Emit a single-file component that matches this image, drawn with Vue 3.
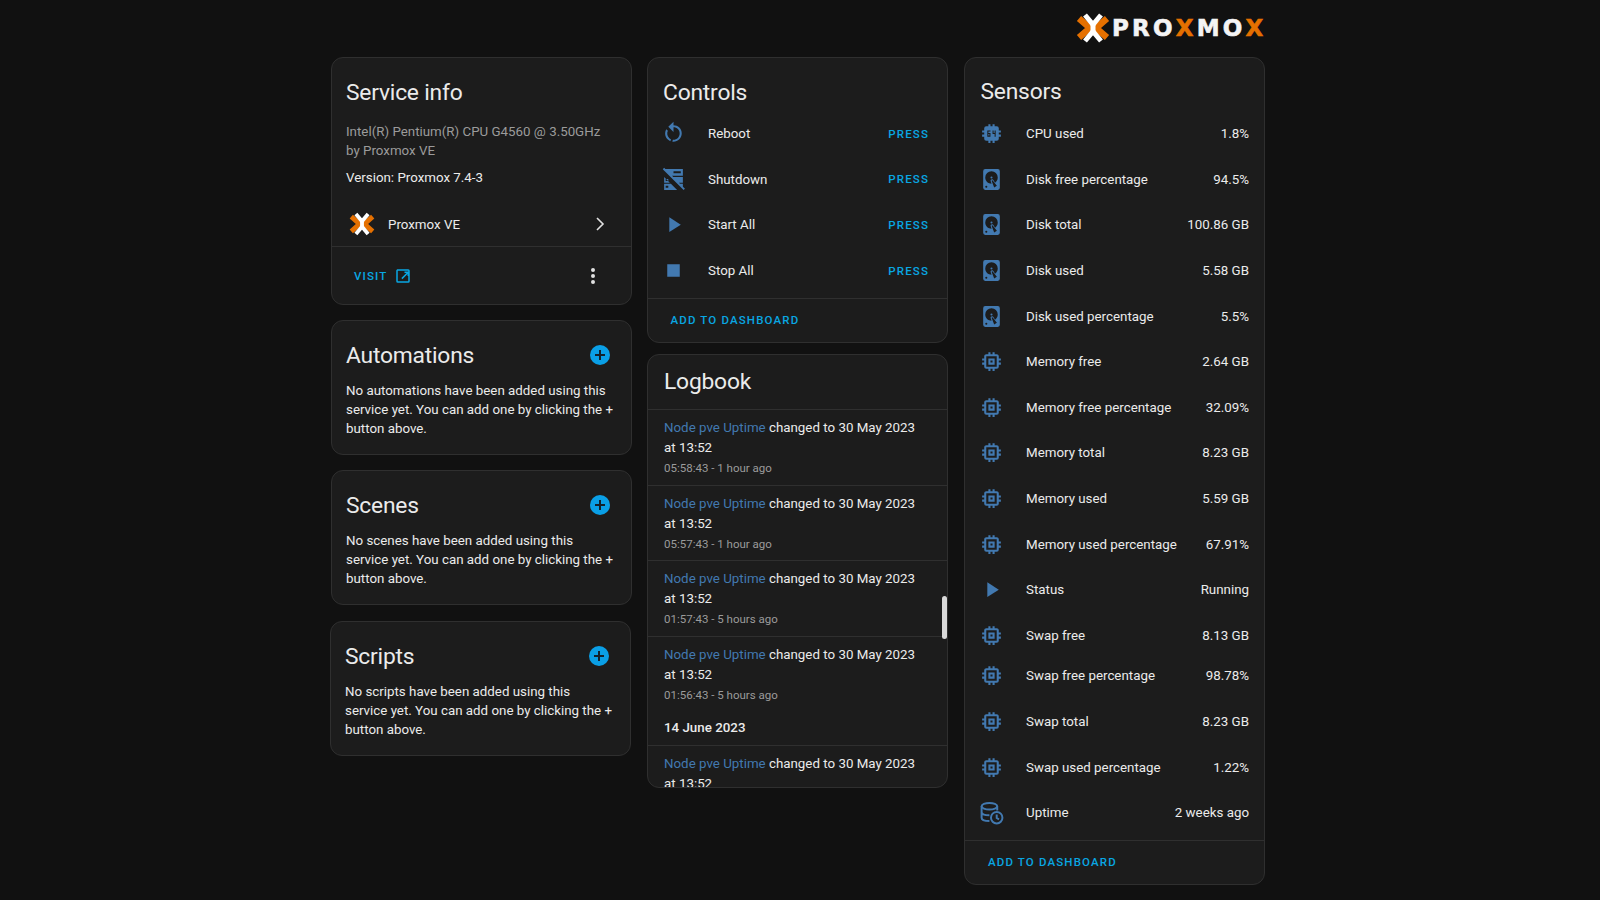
<script setup>
const chip = 'M17,17H7V7H17M21,11V9H19V7C19,5.89 18.1,5 17,5H15V3H13V5H11V3H9V5H7C5.89,5 5,5.89 5,7V9H3V11H5V13H3V15H5V17A2,2 0 0,0 7,19H9V21H11V19H13V21H15V19H17A2,2 0 0,0 19,17V15H21V13H19V11M13,13H11V11H13M15,9H9V15H15V9Z';
const disk = 'M6,2H18A2,2 0 0,1 20,4V20A2,2 0 0,1 18,22H6A2,2 0 0,1 4,20V4A2,2 0 0,1 6,2M12,4A6,6 0 0,0 6,10C6,13.31 8.69,16 12.1,16L11.22,13.77C10.95,13.15 11.2,12.44 11.77,12.1L12.2,11.9C12.8,11.6 13.5,11.9 13.8,12.5L15.4,15C16.9,14.1 18,12.2 18,10A6,6 0 0,0 12,4M12,9A1,1 0 0,1 13,10A1,1 0 0,1 12,11A1,1 0 0,1 11,10A1,1 0 0,1 12,9M7,18A1,1 0 0,0 6,19A1,1 0 0,0 7,20A1,1 0 0,0 8,19A1,1 0 0,0 7,18M12.09,13.27L14.58,19.58L17.17,18.08L12.95,12.77L12.09,13.27Z';
const play = 'M8,5.14V19.14L19,12.14L8,5.14Z';
const stop = 'M18,18H6V6H18V18Z';
const restart = 'M12,4C14.1,4 16.1,4.8 17.6,6.3C20.7,9.4 20.7,14.5 17.6,17.6C15.8,19.5 13.3,20.2 10.9,19.9L11.4,17.9C13.1,18.1 14.9,17.5 16.2,16.2C18.5,13.9 18.5,10.1 16.2,7.7C15.1,6.6 13.5,6 12,6V10.6L7,5.6L12,0.6V4M6.3,17.6C3.7,15 3.3,11 5.1,7.9L6.6,9.4C5.5,11.6 5.9,14.4 7.8,16.2C8.3,16.7 8.9,17.1 9.6,17.4L9,19.4C8,19 7.1,18.4 6.3,17.6Z';
const serverOff = 'M3,2H21V8.5H9L3,2.5ZM19,4H12V6H19ZM3,9.5L8.5,15H3ZM7,11.5H4.5V13.5H7ZM11,9.5H21V15H16.5ZM3,16H9.5L15.5,22H3ZM7,18H4.5V20H7ZM17.5,16H21V20.5ZM1.7,2.1L3,0.8L23,20.8L21.7,22.1Z';

const controls = [
    { name: 'Reboot', icon: restart },
    { name: 'Shutdown', icon: serverOff },
    { name: 'Start All', icon: play },
    { name: 'Stop All', icon: stop },
];

const sensors = [
    { name: 'CPU used', value: '1.8%', type: 'cpu' },
    { name: 'Disk free percentage', value: '94.5%', icon: disk },
    { name: 'Disk total', value: '100.86 GB', icon: disk },
    { name: 'Disk used', value: '5.58 GB', icon: disk },
    { name: 'Disk used percentage', value: '5.5%', icon: disk },
    { name: 'Memory free', value: '2.64 GB', icon: chip },
    { name: 'Memory free percentage', value: '32.09%', icon: chip },
    { name: 'Memory total', value: '8.23 GB', icon: chip },
    { name: 'Memory used', value: '5.59 GB', icon: chip },
    { name: 'Memory used percentage', value: '67.91%', icon: chip },
    { name: 'Status', value: 'Running', icon: play },
    { name: 'Swap free', value: '8.13 GB', icon: chip },
    { name: 'Swap free percentage', value: '98.78%', icon: chip, short: true },
    { name: 'Swap total', value: '8.23 GB', icon: chip },
    { name: 'Swap used percentage', value: '1.22%', icon: chip },
    { name: 'Uptime', value: '2 weeks ago', type: 'uptime' },
];

const logTimes = [
    '05:58:43 - 1 hour ago',
    '05:57:43 - 1 hour ago',
    '01:57:43 - 5 hours ago',
    '01:56:43 - 5 hours ago',
];

const emptyCards = [
    { title: 'Automations', text: 'No automations have been added using this service yet. You can add one by clicking the + button above.' },
    { title: 'Scenes', text: 'No scenes have been added using this service yet. You can add one by clicking the + button above.' },
    { title: 'Scripts', text: 'No scripts have been added using this service yet. You can add one by clicking the + button above.' },
];
</script>

<template>
    <div class="page">
        <div class="logo">
            <svg class="logo-mark" viewBox="0 0 34 30">
                <polyline points="3,5.5 14,15 3,24.5" fill="none" stroke="#e57000" stroke-width="6.5" />
                <polyline points="31,5.5 20,15 31,24.5" fill="none" stroke="#e57000" stroke-width="6.5" />
                <polyline points="9,2 17,11.5 25,2" fill="none" stroke="#fff" stroke-width="5" />
                <polyline points="9,28 17,18.5 25,28" fill="none" stroke="#fff" stroke-width="5" />
                <rect x="14.5" y="11" width="5" height="8" fill="#fff" />
            </svg>
            <span class="logo-word">PRO<b>X</b>MO<b>X</b></span>
        </div>

        <div class="columns">
            <div class="col col-left">
                <section class="card service">
                    <h2>Service info</h2>
                    <p class="muted first">Intel(R) Pentium(R) CPU G4560 @ 3.50GHz<br>by Proxmox VE</p>
                    <p class="version">Version: Proxmox 7.4-3</p>
                    <div class="device">
                        <svg class="device-mark" viewBox="0 0 34 30">
                            <polyline points="3,5.5 14,15 3,24.5" fill="none" stroke="#e57000" stroke-width="6.5" />
                            <polyline points="31,5.5 20,15 31,24.5" fill="none" stroke="#e57000" stroke-width="6.5" />
                            <polyline points="9,2 17,11.5 25,2" fill="none" stroke="#fff" stroke-width="5" />
                            <polyline points="9,28 17,18.5 25,28" fill="none" stroke="#fff" stroke-width="5" />
                            <rect x="14.5" y="11" width="5" height="8" fill="#fff" />
                        </svg>
                        <span class="device-name">Proxmox VE</span>
                        <svg class="chevron" viewBox="0 0 24 24"><polyline points="9,6 15,12 9,18" /></svg>
                    </div>
                    <div class="service-foot">
                        <span class="action">VISIT</span>
                        <svg class="open" viewBox="0 0 24 24"><path d="M14,6V8H16.59L9.76,14.83L11.17,16.24L18,9.41V12H20V6M19,19H5V5H12V3H5C3.89,3 3,3.9 3,5V19A2,2 0 0,0 5,21H19A2,2 0 0,0 21,19V12H19V19Z" /><path d="M12,3H19A2,2 0 0,1 21,5V12H19V5H12Z" /></svg>
                        <svg class="dots" viewBox="0 0 24 24"><path d="M12,16A2,2 0 0,1 14,18A2,2 0 0,1 12,20A2,2 0 0,1 10,18A2,2 0 0,1 12,16M12,10A2,2 0 0,1 14,12A2,2 0 0,1 12,14A2,2 0 0,1 10,12A2,2 0 0,1 12,10M12,4A2,2 0 0,1 14,6A2,2 0 0,1 12,8A2,2 0 0,1 10,6A2,2 0 0,1 12,4Z" /></svg>
                    </div>
                </section>

                <section v-for="c in emptyCards" :key="c.title" class="card empty">
                    <div class="empty-head">
                        <h2>{{ c.title }}</h2>
                        <svg class="plus" viewBox="0 0 24 24">
                            <circle cx="12" cy="12" r="10" fill="#0a9fe6" />
                            <path d="M17,13H13V17H11V13H7V11H11V7H13V11H17Z" fill="#14212b" />
                        </svg>
                    </div>
                    <p class="empty-text">{{ c.text }}</p>
                </section>
            </div>

            <div class="col">
                <section class="card controls">
                    <h2>Controls</h2>
                    <div class="control-list">
                        <div v-for="c in controls" :key="c.name" class="row control">
                            <svg class="state" viewBox="0 0 24 24"><path :d="c.icon" /></svg>
                            <span class="row-name">{{ c.name }}</span>
                            <span class="press">PRESS</span>
                        </div>
                    </div>
                    <div class="foot"><span class="action">ADD TO DASHBOARD</span></div>
                </section>

                <section class="card logbook">
                    <h2>Logbook</h2>
                    <div class="log-list">
                        <div v-for="t in logTimes" :key="t" class="log-entry">
                            <div class="log-msg"><span class="link">Node pve Uptime</span> changed to 30 May 2023 at 13:52</div>
                            <div class="log-time">{{ t }}</div>
                        </div>
                        <div class="log-date">14 June 2023</div>
                        <div class="log-entry">
                            <div class="log-msg"><span class="link">Node pve Uptime</span> changed to 30 May 2023 at 13:52</div>
                        </div>
                    </div>
                    <div class="thumb"></div>
                </section>
            </div>

            <div class="col col-right">
                <section class="card sensors">
                    <h2>Sensors</h2>
                    <div class="sensor-list">
                        <div v-for="s in sensors" :key="s.name" class="row sensor" :class="{ short: s.short }">
                            <svg v-if="s.type === 'cpu'" class="state" viewBox="0 0 24 24">
                                <path d="M9,3V5H7A2,2 0 0,0 5,7V9H3V11H5V13H3V15H5V17A2,2 0 0,0 7,19H9V21H11V19H13V21H15V19H17A2,2 0 0,0 19,17V15H21V13H19V11H21V9H19V7A2,2 0 0,0 17,5H15V3H13V5H11V3H9Z" />
                                <path d="M8,9H11V10H9V11.5H11V15H8ZM9,12.5V14H10V12.5ZM13,9H14V11.5H15V9H16V15H15V12.5H13Z" fill="#1c1c1c" />
                            </svg>
                            <svg v-else-if="s.type === 'uptime'" class="state" viewBox="0 0 24 24">
                                <g fill="none" stroke="#4279b0" stroke-width="1.9">
                                    <ellipse cx="10" cy="6" rx="7.5" ry="3.2" />
                                    <path d="M2.5,6V17C2.5,18.8 5.5,20.2 10,20.2M2.5,11.5C2.5,13.3 5.5,14.7 10,14.7M17.5,6V10" />
                                    <circle cx="17" cy="17" r="5.5" />
                                    <path d="M17,14V17.3L19.2,18.6" />
                                </g>
                            </svg>
                            <svg v-else class="state" viewBox="0 0 24 24"><path :d="s.icon" /></svg>
                            <span class="row-name">{{ s.name }}</span>
                            <span class="row-value">{{ s.value }}</span>
                        </div>
                    </div>
                    <div class="foot"><span class="action">ADD TO DASHBOARD</span></div>
                </section>
            </div>
        </div>
    </div>
</template>

<style>
html, body {
    margin: 0;
    background: #111111;
}
</style>

<style scoped>
.page {
    width: 1600px;
    height: 900px;
    box-sizing: border-box;
    background: #111111;
    color: #ebebeb;
    font-family: Roboto, "Liberation Sans", sans-serif;
    font-size: 13.33px;
    overflow: hidden;
    padding: 13px 335px 0 331px;
}
.logo {
    display: flex;
    align-items: center;
    justify-content: flex-end;
    height: 30px;
    margin-bottom: 14px;
}
.logo-mark {
    width: 34px;
    height: 30px;
    margin-right: 2px;
}
.logo-word {
    font-family: "DejaVu Sans", sans-serif;
    font-weight: 700;
    font-size: 23px;
    color: #f4f4f4;
    letter-spacing: 3.2px;
    -webkit-text-stroke: 0.6px currentColor;
    width: 153px;
    white-space: nowrap;
}
.logo-word b {
    color: #e57000;
}
.columns {
    display: grid;
    grid-template-columns: 301px 301px 301px;
    column-gap: 15px;
    align-items: start;
}
.col {
    display: flex;
    flex-direction: column;
    gap: 11px;
}
.col-left {
    gap: 15px;
}
.col-right {
    margin-left: 1px;
    margin-right: -1px;
}
.card {
    position: relative;
    box-sizing: border-box;
    background: #1c1c1c;
    border: 1px solid #2f2f2f;
    border-radius: 12px;
}
h2 {
    margin: 0;
    font-size: 22.8px;
    font-weight: 400;
    line-height: 32px;
    color: #ebebeb;
    letter-spacing: -0.2px;
}
p {
    margin: 0;
}

.service {
    height: 248px;
    padding: 19px 0 0;
}
.service h2 {
    padding-left: 14px;
}
.muted {
    color: #9b9b9b;
    line-height: 19px;
    padding: 0 14px;
}
.first {
    margin-top: 13px;
}
.version {
    padding: 0 14px;
    margin-top: 8px;
    line-height: 19px;
}
.device {
    display: flex;
    align-items: center;
    height: 26px;
    margin-top: 24px;
    padding: 0 19px 0 17px;
}
.device-mark {
    width: 26px;
    height: 24px;
}
.device-name {
    margin-left: 13px;
    flex: 1;
}
.chevron {
    width: 24px;
    height: 24px;
    fill: none;
    stroke: #e1e1e1;
    stroke-width: 1.6;
}
.service-foot {
    display: flex;
    align-items: center;
    margin-top: 9px;
    border-top: 1px solid #2f2f2f;
    height: 57px;
    padding: 0 26px 0 22px;
}
.action {
    color: #09a7e3;
    font-weight: 500;
    font-size: 11.5px;
    letter-spacing: 1.15px;
}
.open {
    width: 18px;
    height: 18px;
    fill: #09a7e3;
    margin-left: 6px;
    flex: none;
}
.dots {
    width: 24px;
    height: 24px;
    fill: #e1e1e1;
    margin-left: auto;
}

.empty {
    height: 135px;
    padding: 19px 16px 0 14px;
}
.empty:last-child {
    margin-top: 1px;
    margin-left: -1px;
    margin-right: 1px;
}
.empty-head {
    display: flex;
    align-items: center;
    justify-content: space-between;
}
.plus {
    width: 24px;
    height: 24px;
    margin: -2px 3px 0 0;
}
.empty-text {
    margin-top: 9px;
    line-height: 19px;
}

.controls {
    height: 286px;
    padding-top: 19px;
}
.controls h2,
.logbook h2 {
    padding-left: 15px;
}
.sensors h2 {
    padding-left: 15.5px;
}
.logbook h2 {
    padding-left: 16px;
}
.row {
    display: flex;
    align-items: center;
}
.state {
    width: 25px;
    height: 25px;
    fill: #4279b0;
    flex: none;
}
.control-list {
    margin-top: 2px;
}
.control {
    height: 45.6px;
    padding: 0 18px 0 13px;
}
.row-name {
    margin-left: 22px;
    flex: 1;
    white-space: nowrap;
}
.press {
    color: #09a7e3;
    font-weight: 500;
    font-size: 11.5px;
    letter-spacing: 1.15px;
}
.foot {
    border-top: 1px solid #2f2f2f;
    padding-left: 22.5px;
    line-height: 42px;
}
.controls .foot {
    margin-top: 5px;
}

.logbook {
    height: 434px;
    overflow: hidden;
}
.logbook h2 {
    line-height: 54px;
    border-bottom: 1px solid #2f2f2f;
}
.log-entry {
    padding: 8px 30px 9px 16px;
    border-bottom: 1px solid #2f2f2f;
    height: 75.6px;
    box-sizing: border-box;
}
.log-entry:last-child {
    border-bottom: none;
}
.log-entry:nth-child(4) {
    border-bottom: none;
}
.log-msg {
    line-height: 20px;
}
.link {
    color: #4279b0;
}
.log-time {
    color: #9b9b9b;
    font-size: 11.5px;
    line-height: 18px;
    margin-top: 1px;
}
.log-date {
    font-weight: 500;
    line-height: 20px;
    padding: 8px 16px 0;
    height: 36px;
    box-sizing: border-box;
    border-bottom: 1px solid #2f2f2f;
    margin-top: -2px;
}
.thumb {
    position: absolute;
    right: 0;
    top: 241px;
    width: 5px;
    height: 43px;
    background: #d8d8d8;
    border-radius: 3px;
}

.sensors {
    height: 828px;
    padding-top: 18px;
}
.sensor-list {
    margin-top: 3px;
}
.sensor {
    height: 45.6px;
    padding: 0 15px 0 14px;
}
.sensor.short {
    margin-top: -5px;
}
.row-value {
    white-space: nowrap;
}
.sensors .foot {
    margin-top: 4px;
    padding-left: 23px;
}
</style>
